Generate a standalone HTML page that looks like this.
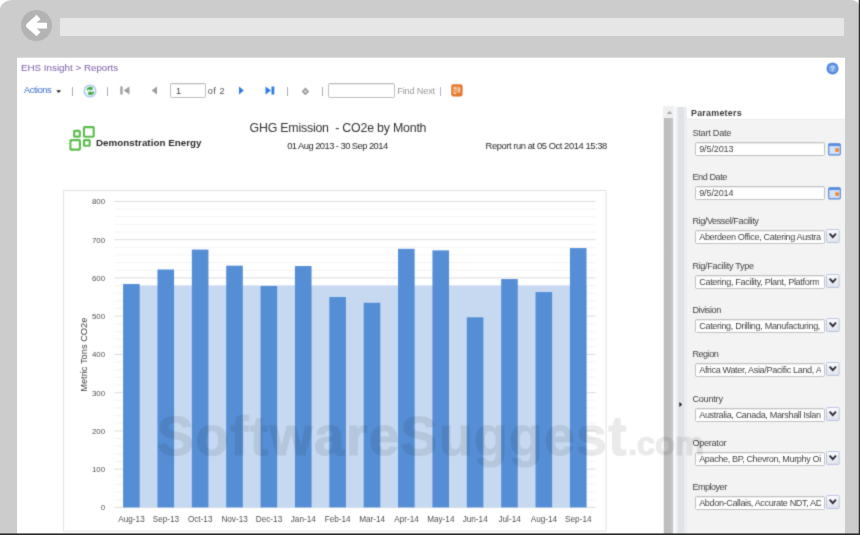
<!DOCTYPE html>
<html lang="en">
<head>
<meta charset="utf-8">
<title>EHS Insight - Reports - GHG Emission CO2e by Month</title>
<style>
*{box-sizing:border-box;margin:0;padding:0}
html,body{width:860px;height:535px;overflow:hidden;background:#fff}
body{position:relative;font-family:"Liberation Sans",sans-serif;color:#333}
.abs{position:absolute}
#frame{left:0;top:0;width:859px;height:540px;background:#cccccc;border-radius:12px 9px 0 0/10px 5px 0 0}
#edge-r{left:858px;top:0;width:2px;height:535px;background:linear-gradient(90deg,rgba(43,43,43,.25) 0,rgba(43,43,43,.25) 50%,#2b2b2b 50%)}
#edge-b{left:0;top:533px;width:860px;height:2px;background:linear-gradient(180deg,rgba(43,43,43,.6) 0,rgba(43,43,43,.6) 50%,#2b2b2b 50%)}
#back{left:20.7px;top:10.3px;width:31px;height:31px;border-radius:50%;background:#b3b3b3}
#addr{left:59.5px;top:18px;width:784px;height:18px;background:#e6e6e6}
#pagetop{left:17px;top:57px;width:828px;height:1px;background:rgba(255,255,255,.3)}
#page{filter:url(#softblur);left:17px;top:58px;width:828px;height:480px;background:#fff;overflow:hidden}
.t{position:absolute;white-space:nowrap;line-height:1}
#crumb{font-size:9.8px;color:#7a5ca8}
.tb{font-size:9.2px;color:#555}
.sep{position:absolute;width:1px;height:9px;background:#a8acb4}
.inp{position:absolute;background:#fff;border:1px solid #bdbdbd;border-radius:1.5px;box-shadow:inset 0 1px 0 #ececec}
.plab{font-size:9.1px;color:#444}
.pinp{overflow:hidden;border-color:#c2c2c2}
.pinp span{position:absolute;left:3.2px;top:2.3px;max-width:121.6px;overflow:hidden;padding-bottom:3px;font-size:9.1px;line-height:1;color:#444;white-space:nowrap}
#wm{font-size:55px;font-weight:700;color:#000;opacity:.08;letter-spacing:1.45px;-webkit-text-stroke:1.2px #000}
#wm span{font-size:33px;letter-spacing:-.3px}
</style>
</head>
<body>
<svg width="0" height="0" style="position:absolute"><filter id="softblur" x="0" y="0" width="100%" height="100%" color-interpolation-filters="sRGB"><feConvolveMatrix order="3" kernelMatrix="0.04 0.19 0.04 0.19 1 0.19 0.04 0.19 0.04" divisor="1.92" edgeMode="duplicate" preserveAlpha="true"/></filter></svg>
<div id="frame" class="abs"></div>
<div id="back" class="abs">
  <svg width="31" height="31" viewBox="0 0 31 31"><path d="M17.6 7 L8 15.6 L17.6 24.2 M9 15.6 H26" fill="none" stroke="#fff" stroke-width="5.8" stroke-linejoin="round"/></svg>
</div>
<div id="addr" class="abs"></div>
<div id="pagetop" class="abs"></div>
<div id="page" class="abs">
  <div id="crumb" class="t" style="left:4px;top:4.9px">EHS Insight &gt; Reports</div>
  <!-- toolbar -->
  <div class="t tb" style="left:7px;top:27.7px;color:#3b6fc8;letter-spacing:-0.42px">Actions</div>
  <svg class="abs" style="left:39px;top:31.5px" width="6" height="4" viewBox="0 0 6 4"><path d="M0.3 0.3H5.1L2.7 2.9Z" fill="#222"/></svg>
  <div class="sep" style="left:55px;top:29px"></div>
  <svg class="abs" style="left:65.75px;top:25.5px" width="14" height="14" viewBox="0 0 14 14">
  <circle cx="7" cy="7" r="5.8" fill="#eef4fd" stroke="#b3cdf3" stroke-width="1.5"/>
  <path d="M3.9 5.6C4.4 3.6 6.6 2.6 8.6 3.4L9 2.8L9.3 5.6L6.6 6L7.3 5.2C6.2 4.8 5 5.2 4.6 6.2Z" fill="#3aad3a" stroke="#3aad3a" stroke-width=".6" stroke-linejoin="round"/>
  <path d="M10.9 8.2C10.4 10.2 8.2 11.2 6.2 10.4L5.8 11L5.5 8.2L8.2 7.8L7.5 8.6C8.6 9 9.8 8.6 10.2 7.6Z" fill="#3aad3a" stroke="#3aad3a" stroke-width=".6" stroke-linejoin="round"/>
</svg>
  <div class="sep" style="left:90px;top:29px"></div>
  <svg class="abs" style="left:103px;top:27.7px" width="10" height="9" viewBox="0 0 10 9"><path d="M0.3 0.4H2.6V8.4H0.3ZM9.4 0.4V8.4L3.8 4.4Z" fill="#9c9c9c"/></svg>
  <svg class="abs" style="left:134px;top:27.7px" width="7" height="9" viewBox="0 0 7 9"><path d="M6 0.4V8.4L0.7 4.4Z" fill="#9c9c9c"/></svg>
  <div class="inp" style="left:153px;top:25px;width:35.5px;height:15px"></div>
  <div class="t tb" style="left:158.9px;top:29px;color:#444">1</div>
  <div class="t tb" style="left:190.8px;top:29px;color:#555;letter-spacing:0.46px">of 2</div>
  <svg class="abs" style="left:221px;top:27.7px" width="7" height="9" viewBox="0 0 7 9"><path d="M1 0.6V8.4L5.8 4.5Z" fill="#2f7be0"/></svg>
  <svg class="abs" style="left:248px;top:27.7px" width="10" height="9" viewBox="0 0 10 9"><path d="M0.5 0.4V8.6L6 4.5ZM6.5 0.4H9.3V8.6H6.5Z" fill="#2f7be0"/></svg>
  <div class="sep" style="left:270px;top:29px"></div>
  <svg class="abs" style="left:284px;top:28.5px" width="9" height="9" viewBox="0 0 9 9"><path d="M4.4 0.5L8.2 4.4L4.4 8.3L0.6 4.4Z" fill="#9a9a9a"/><rect x="3.4" y="3.4" width="2" height="2" fill="#e8e8e8"/></svg>
  <div class="sep" style="left:305.4px;top:29px"></div>
  <div class="inp" style="left:310.6px;top:25px;width:67px;height:15px"></div>
  <div class="t tb" style="left:380.3px;top:29px;color:#999;letter-spacing:-0.19px">Find Next</div>
  <div class="sep" style="left:422.5px;top:29px;background:#a8b4c8"></div>
  <svg class="abs" style="left:434.4px;top:26.1px" width="12" height="13" viewBox="0 0 12 13"><rect x="0.2" y="0.2" width="11.4" height="12.3" rx="2.2" fill="#e6772c"/><rect x="1.8" y="2.4" width="7.6" height="7.4" rx="1.2" fill="#f0a06c"/><path d="M3 4.2C4.2 3.6 5 4.2 5.2 5.4M8.2 3.2V8" stroke="#f6e6c8" stroke-width="1.1" fill="none"/><rect x="2.8" y="8.9" width="1.8" height="1.2" fill="#fdf3e8"/><rect x="5.6" y="9" width="4.6" height="2.2" fill="#e6772c"/></svg>
  <!-- help -->
  <svg class="abs" style="left:808.5px;top:3.7px" width="13" height="13" viewBox="0 0 13 13"><circle cx="6.5" cy="6.5" r="6" fill="#4f86dd"/><circle cx="6.5" cy="6.5" r="4" fill="#7aa6ea"/><text x="6.5" y="9.3" font-size="8" font-weight="700" fill="#dfeafa" text-anchor="middle" font-family="Liberation Sans, sans-serif">?</text></svg>
  <!-- report header -->
  <svg class="abs" style="left:51px;top:67px" width="30" height="28" viewBox="0 0 30 28" fill="none" stroke="#5bbd4e" stroke-width="2.1"><rect x="16" y="2.1" width="9.7" height="9.7" rx="0.7"/><rect x="6.1" y="5.9" width="5.7" height="5.7" rx="0.6"/><rect x="2.4" y="15.1" width="9.5" height="9.5" rx="0.7"/><rect x="16" y="15.1" width="5.7" height="5.7" rx="0.6"/></svg>
  <div class="t" style="left:79px;top:80.3px;font-size:9.8px;letter-spacing:.02px;font-weight:700;color:#2b2b2b">Demonstration Energy</div>
  <div class="t" style="left:232.5px;top:64.4px;font-size:12.4px;letter-spacing:-.22px;color:#333">GHG Emission &nbsp;- CO2e by Month</div>
  <div class="t" style="left:270.2px;top:83.4px;font-size:9.4px;letter-spacing:-0.55px;color:#2a2a2a">01 Aug 2013 - 30 Sep 2014</div>
  <div class="t" style="left:468.6px;top:83.4px;font-size:9.4px;letter-spacing:-0.43px;color:#2a2a2a">Report run at 05 Oct 2014 15:38</div>
  <!-- chart -->
  <svg class="abs" id="chart" style="left:46px;top:132px" width="545" height="345" viewBox="0 0 545 345" font-family="Liberation Sans, sans-serif">
  <rect x="0.5" y="0.5" width="542.5" height="340.7" fill="#fff" stroke="#e2e2e2" stroke-width="1"/>
  <path d="M51.2 309.75H532.5M51.2 302.10H532.5M51.2 294.45H532.5M51.2 286.80H532.5M51.2 271.50H532.5M51.2 263.85H532.5M51.2 256.20H532.5M51.2 248.55H532.5M51.2 233.25H532.5M51.2 225.60H532.5M51.2 217.95H532.5M51.2 210.30H532.5M51.2 195.00H532.5M51.2 187.35H532.5M51.2 179.70H532.5M51.2 172.05H532.5M51.2 156.75H532.5M51.2 149.10H532.5M51.2 141.45H532.5M51.2 133.80H532.5M51.2 118.50H532.5M51.2 110.85H532.5M51.2 103.20H532.5M51.2 95.55H532.5M51.2 80.25H532.5M51.2 72.60H532.5M51.2 64.95H532.5M51.2 57.30H532.5M51.2 42.00H532.5M51.2 34.35H532.5M51.2 26.70H532.5M51.2 19.05H532.5" stroke="#f3f3f3" stroke-width="0.9" fill="none"/>
  <path d="M51.2 317.40H532.5M51.2 279.15H532.5M51.2 240.90H532.5M51.2 202.65H532.5M51.2 164.40H532.5M51.2 126.15H532.5M51.2 87.90H532.5M51.2 49.65H532.5M51.2 11.40H532.5" stroke="#dcdcdc" stroke-width="1" fill="none"/>
  <rect x="60.1" y="95.55" width="463.5" height="221.85" fill="#c6d9f1"/>
  <rect x="60.10" y="94.02" width="16.6" height="223.38" fill="#558ed5"/>
  <rect x="94.47" y="79.49" width="16.6" height="237.91" fill="#558ed5"/>
  <rect x="128.84" y="59.59" width="16.6" height="257.81" fill="#558ed5"/>
  <rect x="163.21" y="75.66" width="16.6" height="241.74" fill="#558ed5"/>
  <rect x="197.58" y="95.93" width="16.6" height="221.47" fill="#558ed5"/>
  <rect x="231.95" y="76.04" width="16.6" height="241.36" fill="#558ed5"/>
  <rect x="266.32" y="107.02" width="16.6" height="210.38" fill="#558ed5"/>
  <rect x="300.69" y="112.76" width="16.6" height="204.64" fill="#558ed5"/>
  <rect x="335.06" y="58.83" width="16.6" height="258.57" fill="#558ed5"/>
  <rect x="369.43" y="60.36" width="16.6" height="257.04" fill="#558ed5"/>
  <rect x="403.80" y="127.30" width="16.6" height="190.10" fill="#558ed5"/>
  <rect x="438.17" y="89.05" width="16.6" height="228.35" fill="#558ed5"/>
  <rect x="472.54" y="102.05" width="16.6" height="215.35" fill="#558ed5"/>
  <rect x="506.91" y="58.06" width="16.6" height="259.33" fill="#558ed5"/>
  <g font-size="7.9" fill="#505050" text-anchor="end"><text x="42.1" y="320.3">0</text><text x="42.1" y="282.0">100</text><text x="42.1" y="243.8">200</text><text x="42.1" y="205.5">300</text><text x="42.1" y="167.3">400</text><text x="42.1" y="129.0">500</text><text x="42.1" y="90.8">600</text><text x="42.1" y="52.5">700</text><text x="42.1" y="14.3">800</text></g>
  <g font-size="8.2" fill="#505050" text-anchor="middle"><text x="68.5" y="331.6">Aug-13</text><text x="102.9" y="331.6">Sep-13</text><text x="137.2" y="331.6">Oct-13</text><text x="171.6" y="331.6">Nov-13</text><text x="206.0" y="331.6">Dec-13</text><text x="240.3" y="331.6">Jan-14</text><text x="274.7" y="331.6">Feb-14</text><text x="309.1" y="331.6">Mar-14</text><text x="343.5" y="331.6">Apr-14</text><text x="377.8" y="331.6">May-14</text><text x="412.2" y="331.6">Jun-14</text><text x="446.6" y="331.6">Jul-14</text><text x="480.9" y="331.6">Aug-14</text><text x="515.3" y="331.6">Sep-14</text></g>
  <text font-size="9.3" fill="#404040" text-anchor="middle" transform="translate(23.7 164.7) rotate(-90)">Metric Tons CO2e</text>
  </svg>
  <!-- parameters -->
  <div class="abs" id="sbar" style="left:646.3px;top:48px;width:11px;height:440px;background:#f0f0f0"></div>
  <svg class="abs" style="left:648.5px;top:51.8px" width="7" height="5" viewBox="0 0 7 5"><path d="M0.8 4L3.5 1L6.2 4Z" fill="#a8a8a8"/></svg>
  <div class="abs" id="sthumb" style="left:647.2px;top:60px;width:9px;height:440px;background:linear-gradient(90deg,#bcbcbc,#c0c0c0 70%,#cacaca)"></div>
  <div class="abs" id="split" style="left:658px;top:48.5px;width:12px;height:440px;background:linear-gradient(90deg,#f1f4fa 0,#eaeef6 2.8px,#e2e2e2 3.2px,#e2e2e2 8.8px,#e8ecf5 9.2px,#e8ecf5 100%)"></div>
  <svg class="abs" style="left:662.3px;top:342.8px" width="4" height="7" viewBox="0 0 4 7"><path d="M0.4 0.9L3 3.5L0.4 6.1Z" fill="#111"/></svg>
  <div class="t" style="left:674px;top:50.9px;font-size:8.9px;letter-spacing:.25px;font-weight:700;color:#3a3a3a">Parameters</div>
  <div class="abs" id="ppanel" style="left:669.5px;top:61px;width:158.5px;height:430px;background:#f3f3f3;border-top:1px solid #e8ebf0"></div>
  <div class="t plab" style="left:675.4px;top:70.8px;letter-spacing:-0.22px">Start Date</div>
  <div class="inp pinp" style="left:678px;top:84px;width:130px;height:14px"><span style="letter-spacing:-0.15px">9/5/2013</span></div>
  <svg class="abs" style="left:811.2px;top:84.7px" width="13" height="13" viewBox="0 0 13 13"><rect x="0.7" y="0.7" width="11.6" height="11.2" rx="1.2" fill="#cddcf5" stroke="#5a86d6" stroke-width="1.1"/><rect x="0.6" y="0.5" width="11.8" height="2.6" rx="1" fill="#5a8ee4"/><path d="M2.6 5.2H7M2.6 7.2H7M2.6 9.2H10.4" stroke="#eaf1fc" stroke-width="1" stroke-dasharray="1.3 0.7"/><rect x="7.3" y="5.3" width="3.6" height="3.6" rx="0.8" fill="#f08a2e"/></svg>
  <div class="t plab" style="left:675.4px;top:115.11px;letter-spacing:-0.43px">End Date</div>
  <div class="inp pinp" style="left:678px;top:128px;width:130px;height:14px"><span style="letter-spacing:-0.15px">9/5/2014</span></div>
  <svg class="abs" style="left:811.2px;top:128.7px" width="13" height="13" viewBox="0 0 13 13"><rect x="0.7" y="0.7" width="11.6" height="11.2" rx="1.2" fill="#cddcf5" stroke="#5a86d6" stroke-width="1.1"/><rect x="0.6" y="0.5" width="11.8" height="2.6" rx="1" fill="#5a8ee4"/><path d="M2.6 5.2H7M2.6 7.2H7M2.6 9.2H10.4" stroke="#eaf1fc" stroke-width="1" stroke-dasharray="1.3 0.7"/><rect x="7.3" y="5.3" width="3.6" height="3.6" rx="0.8" fill="#f08a2e"/></svg>
  <div class="t plab" style="left:675.4px;top:159.42px;letter-spacing:-0.41px">Rig/Vessel/Facility</div>
  <div class="inp pinp" style="left:678px;top:172px;width:130px;height:14px"><span style="letter-spacing:-0.37px">Aberdeen Office, Catering Austra</span></div>
  <svg class="abs" style="left:808.8px;top:170.5px" width="14" height="14" viewBox="0 0 14 14"><defs><linearGradient id="dg2" x1="0" y1="0" x2="0" y2="1"><stop offset="0" stop-color="#fafbfe"/><stop offset="1" stop-color="#dfe2ee"/></linearGradient></defs><rect x="0.5" y="0.5" width="12.6" height="13" rx="1" fill="url(#dg2)" stroke="#b4c0da" stroke-width="0.9"/><path d="M3.6 4.6L6.8 8.2L10 4.6" fill="none" stroke="#2c2630" stroke-width="1.8"/></svg>
  <div class="t plab" style="left:675.4px;top:203.73px;letter-spacing:-0.31px">Rig/Facility Type</div>
  <div class="inp pinp" style="left:678px;top:217px;width:130px;height:14px"><span style="letter-spacing:-0.33px">Catering, Facility, Plant, Platform</span></div>
  <svg class="abs" style="left:808.8px;top:215.5px" width="14" height="14" viewBox="0 0 14 14"><defs><linearGradient id="dg3" x1="0" y1="0" x2="0" y2="1"><stop offset="0" stop-color="#fafbfe"/><stop offset="1" stop-color="#dfe2ee"/></linearGradient></defs><rect x="0.5" y="0.5" width="12.6" height="13" rx="1" fill="url(#dg3)" stroke="#b4c0da" stroke-width="0.9"/><path d="M3.6 4.6L6.8 8.2L10 4.6" fill="none" stroke="#2c2630" stroke-width="1.8"/></svg>
  <div class="t plab" style="left:675.4px;top:248.04px;letter-spacing:-0.42px">Division</div>
  <div class="inp pinp" style="left:678px;top:261px;width:130px;height:14px"><span style="letter-spacing:-0.34px">Catering, Drilling, Manufacturing,</span></div>
  <svg class="abs" style="left:808.8px;top:259.5px" width="14" height="14" viewBox="0 0 14 14"><defs><linearGradient id="dg4" x1="0" y1="0" x2="0" y2="1"><stop offset="0" stop-color="#fafbfe"/><stop offset="1" stop-color="#dfe2ee"/></linearGradient></defs><rect x="0.5" y="0.5" width="12.6" height="13" rx="1" fill="url(#dg4)" stroke="#b4c0da" stroke-width="0.9"/><path d="M3.6 4.6L6.8 8.2L10 4.6" fill="none" stroke="#2c2630" stroke-width="1.8"/></svg>
  <div class="t plab" style="left:675.4px;top:292.35px;letter-spacing:-0.46px">Region</div>
  <div class="inp pinp" style="left:678px;top:305px;width:130px;height:14px"><span style="letter-spacing:-0.35px">Africa Water, Asia/Pacific Land, A</span></div>
  <svg class="abs" style="left:808.8px;top:303.5px" width="14" height="14" viewBox="0 0 14 14"><defs><linearGradient id="dg5" x1="0" y1="0" x2="0" y2="1"><stop offset="0" stop-color="#fafbfe"/><stop offset="1" stop-color="#dfe2ee"/></linearGradient></defs><rect x="0.5" y="0.5" width="12.6" height="13" rx="1" fill="url(#dg5)" stroke="#b4c0da" stroke-width="0.9"/><path d="M3.6 4.6L6.8 8.2L10 4.6" fill="none" stroke="#2c2630" stroke-width="1.8"/></svg>
  <div class="t plab" style="left:675.4px;top:336.66px;letter-spacing:-0.21px">Country</div>
  <div class="inp pinp" style="left:678px;top:350px;width:130px;height:14px"><span style="letter-spacing:-0.36px">Australia, Canada, Marshall Islan</span></div>
  <svg class="abs" style="left:808.8px;top:348.5px" width="14" height="14" viewBox="0 0 14 14"><defs><linearGradient id="dg6" x1="0" y1="0" x2="0" y2="1"><stop offset="0" stop-color="#fafbfe"/><stop offset="1" stop-color="#dfe2ee"/></linearGradient></defs><rect x="0.5" y="0.5" width="12.6" height="13" rx="1" fill="url(#dg6)" stroke="#b4c0da" stroke-width="0.9"/><path d="M3.6 4.6L6.8 8.2L10 4.6" fill="none" stroke="#2c2630" stroke-width="1.8"/></svg>
  <div class="t plab" style="left:675.4px;top:380.97px;letter-spacing:-0.26px">Operator</div>
  <div class="inp pinp" style="left:678px;top:394px;width:130px;height:14px"><span style="letter-spacing:-0.39px">Apache, BP, Chevron, Murphy Oi</span></div>
  <svg class="abs" style="left:808.8px;top:392.5px" width="14" height="14" viewBox="0 0 14 14"><defs><linearGradient id="dg7" x1="0" y1="0" x2="0" y2="1"><stop offset="0" stop-color="#fafbfe"/><stop offset="1" stop-color="#dfe2ee"/></linearGradient></defs><rect x="0.5" y="0.5" width="12.6" height="13" rx="1" fill="url(#dg7)" stroke="#b4c0da" stroke-width="0.9"/><path d="M3.6 4.6L6.8 8.2L10 4.6" fill="none" stroke="#2c2630" stroke-width="1.8"/></svg>
  <div class="t plab" style="left:675.4px;top:425.28px;letter-spacing:-0.52px">Employer</div>
  <div class="inp pinp" style="left:678px;top:438px;width:130px;height:14px"><span style="letter-spacing:-0.38px">Abdon-Callais, Accurate NDT, AD</span></div>
  <svg class="abs" style="left:808.8px;top:436.5px" width="14" height="14" viewBox="0 0 14 14"><defs><linearGradient id="dg8" x1="0" y1="0" x2="0" y2="1"><stop offset="0" stop-color="#fafbfe"/><stop offset="1" stop-color="#dfe2ee"/></linearGradient></defs><rect x="0.5" y="0.5" width="12.6" height="13" rx="1" fill="url(#dg8)" stroke="#b4c0da" stroke-width="0.9"/><path d="M3.6 4.6L6.8 8.2L10 4.6" fill="none" stroke="#2c2630" stroke-width="1.8"/></svg>
  <!-- watermark -->
  <div class="t" id="wm" style="left:140px;top:351px">SoftwareSuggest<span>.com</span></div>
</div>

<div id="edge-r" class="abs"></div>
<div id="edge-b" class="abs"></div>
</body>
</html>
